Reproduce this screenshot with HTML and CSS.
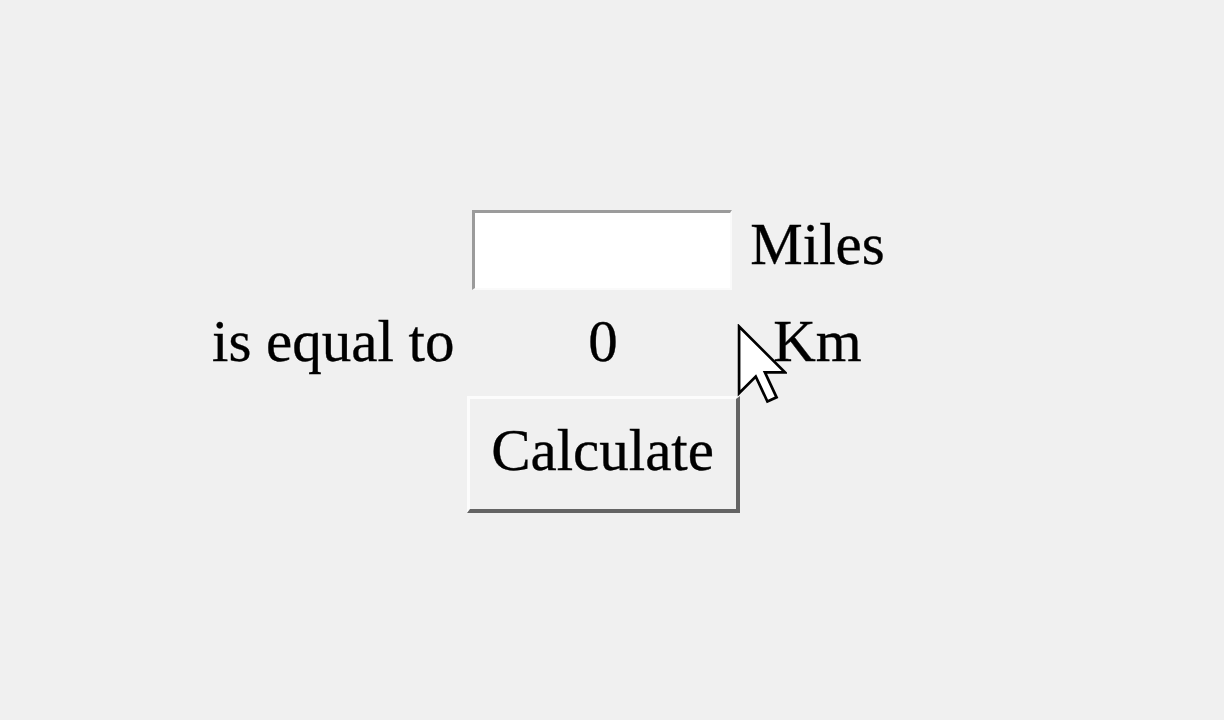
FILE: index.html
```html
<!DOCTYPE html>
<html lang="en">
<head>
    <meta charset="UTF-8">
    <title>Miles to Km</title>
    <link rel="stylesheet" href="styles.css">
</head>
<body>
    <div class="converter">
        <div class="cell"></div>
        <div class="cell"><input type="text" class="miles-input"></div>
        <div class="cell unit top-row">Miles</div>

        <div class="cell label mid-row">is equal to</div>
        <div class="cell result mid-row">0</div>
        <div class="cell unit mid-row">Km</div>

        <div class="cell"></div>
        <div class="cell"><button class="calc-btn">Calculate</button></div>
        <div class="cell"></div>

        <!-- mouse pointer hovering over the window -->
        <svg class="pointer" viewBox="0 0 12 19" width="50" height="80">
            <path d="M0.5 0.5 V16.5 L4.5 12.5 L7.3 18.5 L9.5 17.5 L6.7 11.5 H11.5 Z" fill="#fff" stroke="#000" stroke-width="0.65" stroke-linejoin="miter"/>
        </svg>
    </div>
</body>
</html>
```

FILE: styles.css
```css
body {
    margin: 0;
    background: #f0f0f0;
    font-family: "Liberation Serif", "Times New Roman", serif;
    font-size: 59px;
    color: #000;
    min-height: 100vh;
}

.converter {
    position: relative;
    display: grid;
    grid-template-columns: auto 273px 156px;
    grid-template-rows: 80px 106px 117px;
    align-items: center;
    padding: 210px 0 0 212px;
    width: max-content;
    -webkit-text-stroke: 0.35px #000;
}

.cell {
    line-height: 1;
}

.top-row {
    margin-bottom: 12px;
}

.mid-row {
    margin-bottom: 4px;
}

.label {
    text-align: right;
    padding-right: 12px;
}

.result {
    text-align: center;
}

.unit {
    text-align: center;
}

.miles-input {
    display: block;
    box-sizing: border-box;
    width: 260px;
    height: 80px;
    margin-left: 5px;
    border-style: solid;
    border-width: 3px 2px 2px 3px;
    border-color: #9b9b9b #fafafa #fafafa #9b9b9b;
    background: #fff;
    outline: none;
    font: inherit;
}

.calc-btn {
    display: block;
    box-sizing: border-box;
    width: 273px;
    height: 117px;
    border-style: solid;
    border-width: 3px 4px 4px 3px;
    border-color: #fcfcfc #646464 #646464 #fcfcfc;
    background: #f0f0f0;
    font: inherit;
    color: #000;
    padding: 0 0 8px;
}

.pointer {
    position: absolute;
    left: 737px;
    top: 324px;
}
```
